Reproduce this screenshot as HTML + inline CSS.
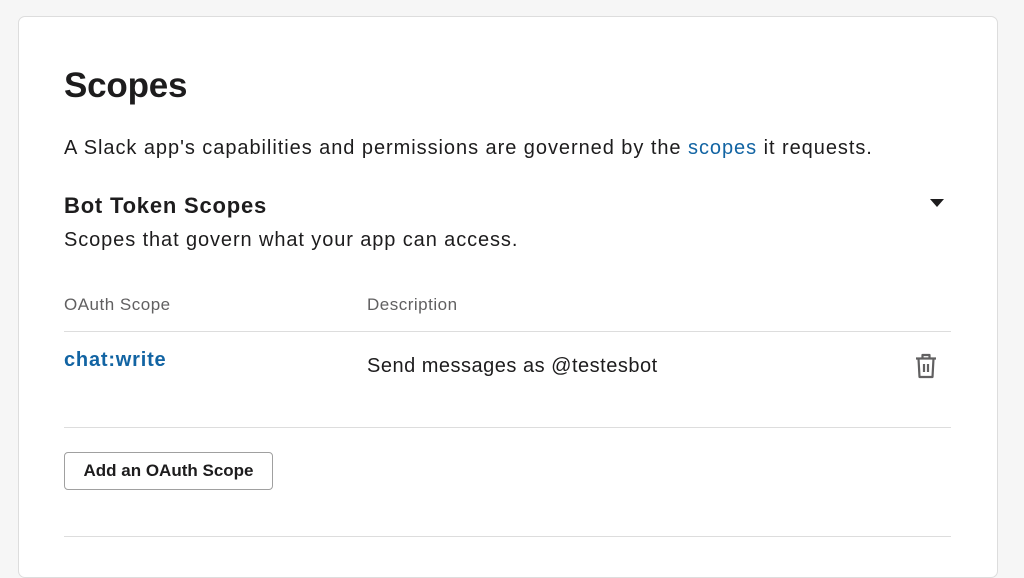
<!DOCTYPE html>
<html><head><style>
body{margin:0;background:#f6f6f6;width:1024px;height:543px;overflow:hidden;font-family:"Liberation Sans",sans-serif;color:#1d1c1d;}
.card{position:absolute;left:18px;top:16px;width:978px;height:560px;background:#fff;border:1px solid #ddd;border-radius:7px;}
.t{position:absolute;white-space:nowrap;}
.line{position:absolute;left:64px;width:887px;height:1px;background:#ddd;}
</style></head><body>
<div class="card"></div>
<div class="t" style="left:64px;top:66px;font-size:35px;font-weight:bold;letter-spacing:-0.2px">Scopes</div>
<div class="t" style="left:64px;top:137px;font-size:20px;letter-spacing:0.95px">A Slack app's capabilities and permissions are governed by the <span style="color:#1264a3">scopes</span> it requests.</div>
<div class="t" style="left:64px;top:193px;font-size:22px;font-weight:bold;letter-spacing:0.8px">Bot Token Scopes</div>
<svg style="position:absolute;left:930px;top:199px" width="14" height="9"><path d="M0 0H14L7 8Z" fill="#1d1c1d"/></svg>
<div class="t" style="left:64px;top:229px;font-size:20px;letter-spacing:0.9px">Scopes that govern what your app can access.</div>
<div class="t" style="left:64px;top:295px;font-size:17px;letter-spacing:0.5px;color:#616061">OAuth Scope</div>
<div class="t" style="left:367px;top:295px;font-size:17px;letter-spacing:0.5px;color:#616061">Description</div>
<div class="line" style="top:331px"></div>
<div class="t" style="left:64px;top:349px;font-size:20px;font-weight:bold;letter-spacing:0.8px;color:#1264a3">chat:write</div>
<div class="t" style="left:367px;top:355px;font-size:20px;letter-spacing:0.5px">Send messages as @testesbot</div>
<svg style="position:absolute;left:914px;top:352px" width="24" height="28" viewBox="0 0 24 28" fill="none" stroke="#616061" stroke-width="2.2" stroke-linejoin="round"><path d="M2 6.5H22M8.5 6.5V3H15.5V6.5M4.5 6.5L5.5 25H18.5L19.5 6.5M10 12V20M14 12V20"/></svg>
<div class="line" style="top:427px"></div>
<div style="position:absolute;left:64px;top:452px;width:209px;height:38px;border:1px solid #a0a0a0;border-radius:4px;box-sizing:border-box;font-size:17px;font-weight:bold;line-height:36px;text-align:center">Add an OAuth Scope</div>
<div class="line" style="top:536px"></div>
</body></html>
